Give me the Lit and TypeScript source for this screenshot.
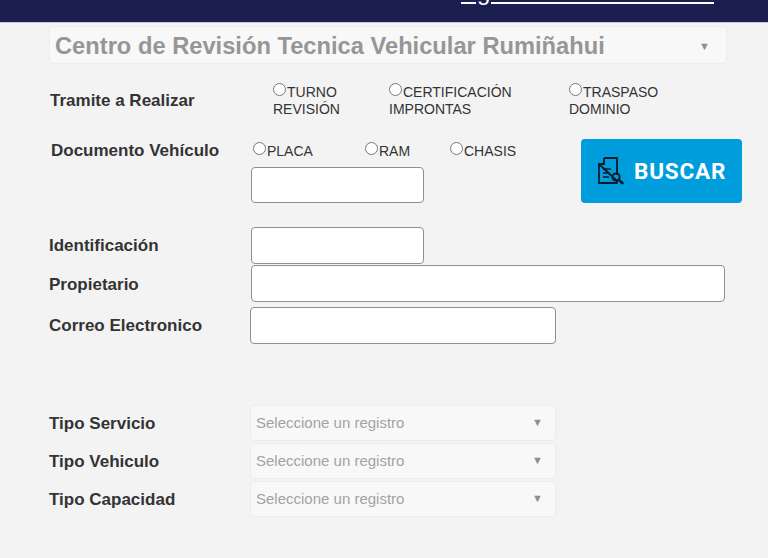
import { LitElement, html, css } from "lit";
import { customElement } from "lit/decorators.js";

@customElement("app-root")
export class AppRoot extends LitElement {
  static styles = css`
    :host { display: block; width: 768px; height: 558px; overflow: hidden; background: #f3f3f3; font-family: "Liberation Sans", Arial, sans-serif; color: #333; }
    .top { height: 22px; background: #1a1f4f; border-bottom: 1px solid #c9c9d4; overflow: hidden; display: flex; justify-content: flex-end; padding-right: 54px; }
    .top a { color: #fff; font-size: 24px; line-height: 30px; margin-top: -23px; text-decoration: underline; white-space: nowrap; width: 253px; overflow: hidden; }
    .form { padding: 3px 26px 0 49px; display: flex; flex-direction: column; }
    .select { display: flex; align-items: center; justify-content: space-between; box-sizing: border-box; background: #f8f8f8; border: 1px solid #ececec; border-radius: 4px; color: #a0a0a0; }
    .select .arrow { color: #8f8f8f; font-size: 11px; }
    .main { width: 678px; height: 38px; font-size: 23.7px; font-weight: 700; padding: 2px 16px 0 5px; color: #969696; }
    .row { display: flex; }
    .label { font-size: 17px; font-weight: 700; color: #333; white-space: nowrap; flex: none; }
    .tramite { margin-top: 18px; height: 37px; align-items: center; }
    .tramite .label { width: 223px; margin-left: 1px; margin-top: 1px; }
    .opt { font-size: 14px; line-height: 17px; color: #333; display: block; }
    .opt input { width: 13px; height: 13px; margin: 0 1px 0 0; vertical-align: 1px; }
    .o1 { width: 116px; }
    .o2 { width: 180px; }
    .o3 { width: 100px; }
    .doc { margin-top: 20px; height: 64px; }
    .doc .label { width: 200px; margin-left: 2px; margin-top: 2px; }
    .doc-mid { width: 330px; flex: none; }
    .radios { display: flex; margin-top: 3px; margin-left: 2px; height: 25px; }
    .radios .p { width: 112px; }
    .radios .r { width: 85px; }
    .field { box-sizing: border-box; display: block; height: 37px; background: #fff; border: 1px solid #8f8f8f; border-radius: 4px; padding: 0 8px; outline: none; flex: none; }
    .doc .field { height: 36px; }
    .w173 { width: 173px; }
    .w474 { width: 474px; }
    .w307 { width: 306px; margin-left: 1px; }
    .buscar { width: 161px; height: 64px; flex: none; box-sizing: border-box; background: #009ddc; border: none; border-radius: 4px; color: #fff; font: 700 22.5px/1 Roboto, "Liberation Sans", sans-serif; letter-spacing: 0.8px; display: flex; align-items: center; padding: 0 0 0 15px; gap: 10px; }
    .line { align-items: center; }
    .line .label { width: 202px; }
    .id { margin-top: 24px; }
    .id .label { margin-top: 1px; }
    .prop { margin-top: 1px; height: 37px; }
    .prop .label { margin-top: 2px; }
    .mail { margin-top: 5px; height: 37px; }
    .mail .label { width: 200px; margin-top: 1px; }
    .tipos { margin-top: 61px; display: flex; flex-direction: column; gap: 2px; }
    .tipo { height: 36px; align-items: center; }
    .tipo .label { width: 201px; margin-top: 2px; }
    .small { width: 306px; height: 36px; font-size: 15px; padding: 0 12px 2px 5px; color: #a3a3a3; }
  `;

  render() {
    const tipo = (name: string) => html`
      <div class="row tipo">
        <span class="label">${name}</span>
        <div class="select small"><span>Seleccione un registro</span><span class="arrow">▼</span></div>
      </div>`;
    return html`
      <div class="top"><a href="#">Agendamiento de Turnos</a></div>
      <div class="form">
        <div class="select main"><span>Centro de Revisión Tecnica Vehicular Rumiñahui</span><span class="arrow">▼</span></div>
        <div class="row tramite">
          <span class="label">Tramite a Realizar</span>
          <label class="opt o1"><input type="radio" name="t" />TURNO<br />REVISIÓN</label>
          <label class="opt o2"><input type="radio" name="t" />CERTIFICACIÓN<br />IMPRONTAS</label>
          <label class="opt o3"><input type="radio" name="t" />TRASPASO<br />DOMINIO</label>
        </div>
        <div class="row doc">
          <span class="label">Documento Vehículo</span>
          <div class="doc-mid">
            <div class="radios">
              <label class="opt p"><input type="radio" name="d" />PLACA</label>
              <label class="opt r"><input type="radio" name="d" />RAM</label>
              <label class="opt"><input type="radio" name="d" />CHASIS</label>
            </div>
            <input class="field w173" />
          </div>
          <button class="buscar">
            <svg width="28" height="30" viewBox="0 0 28 30" fill="none" stroke="#0b1a2b" stroke-width="1.8">
              <path d="M8 2h13v15M21 25v2H3V8z" stroke-linejoin="round"/>
              <path d="M8 2v6H3"/>
              <path d="M7 13h8M7 17h6M7 21h6" stroke-width="1.6"/>
              <circle cx="20" cy="21" r="3.6" stroke-width="2"/>
              <path d="M23 24l3.4 3" stroke-width="2.6" stroke-linecap="round"/>
            </svg>
            <span>BUSCAR</span>
          </button>
        </div>
        <div class="row line id"><span class="label">Identificación</span><input class="field w173" /></div>
        <div class="row line prop"><span class="label">Propietario</span><input class="field w474" /></div>
        <div class="row line mail"><span class="label">Correo Electronico</span><input class="field w307" /></div>
        <div class="tipos">
          ${tipo("Tipo Servicio")}
          ${tipo("Tipo Vehiculo")}
          ${tipo("Tipo Capacidad")}
        </div>
      </div>
    `;
  }
}
